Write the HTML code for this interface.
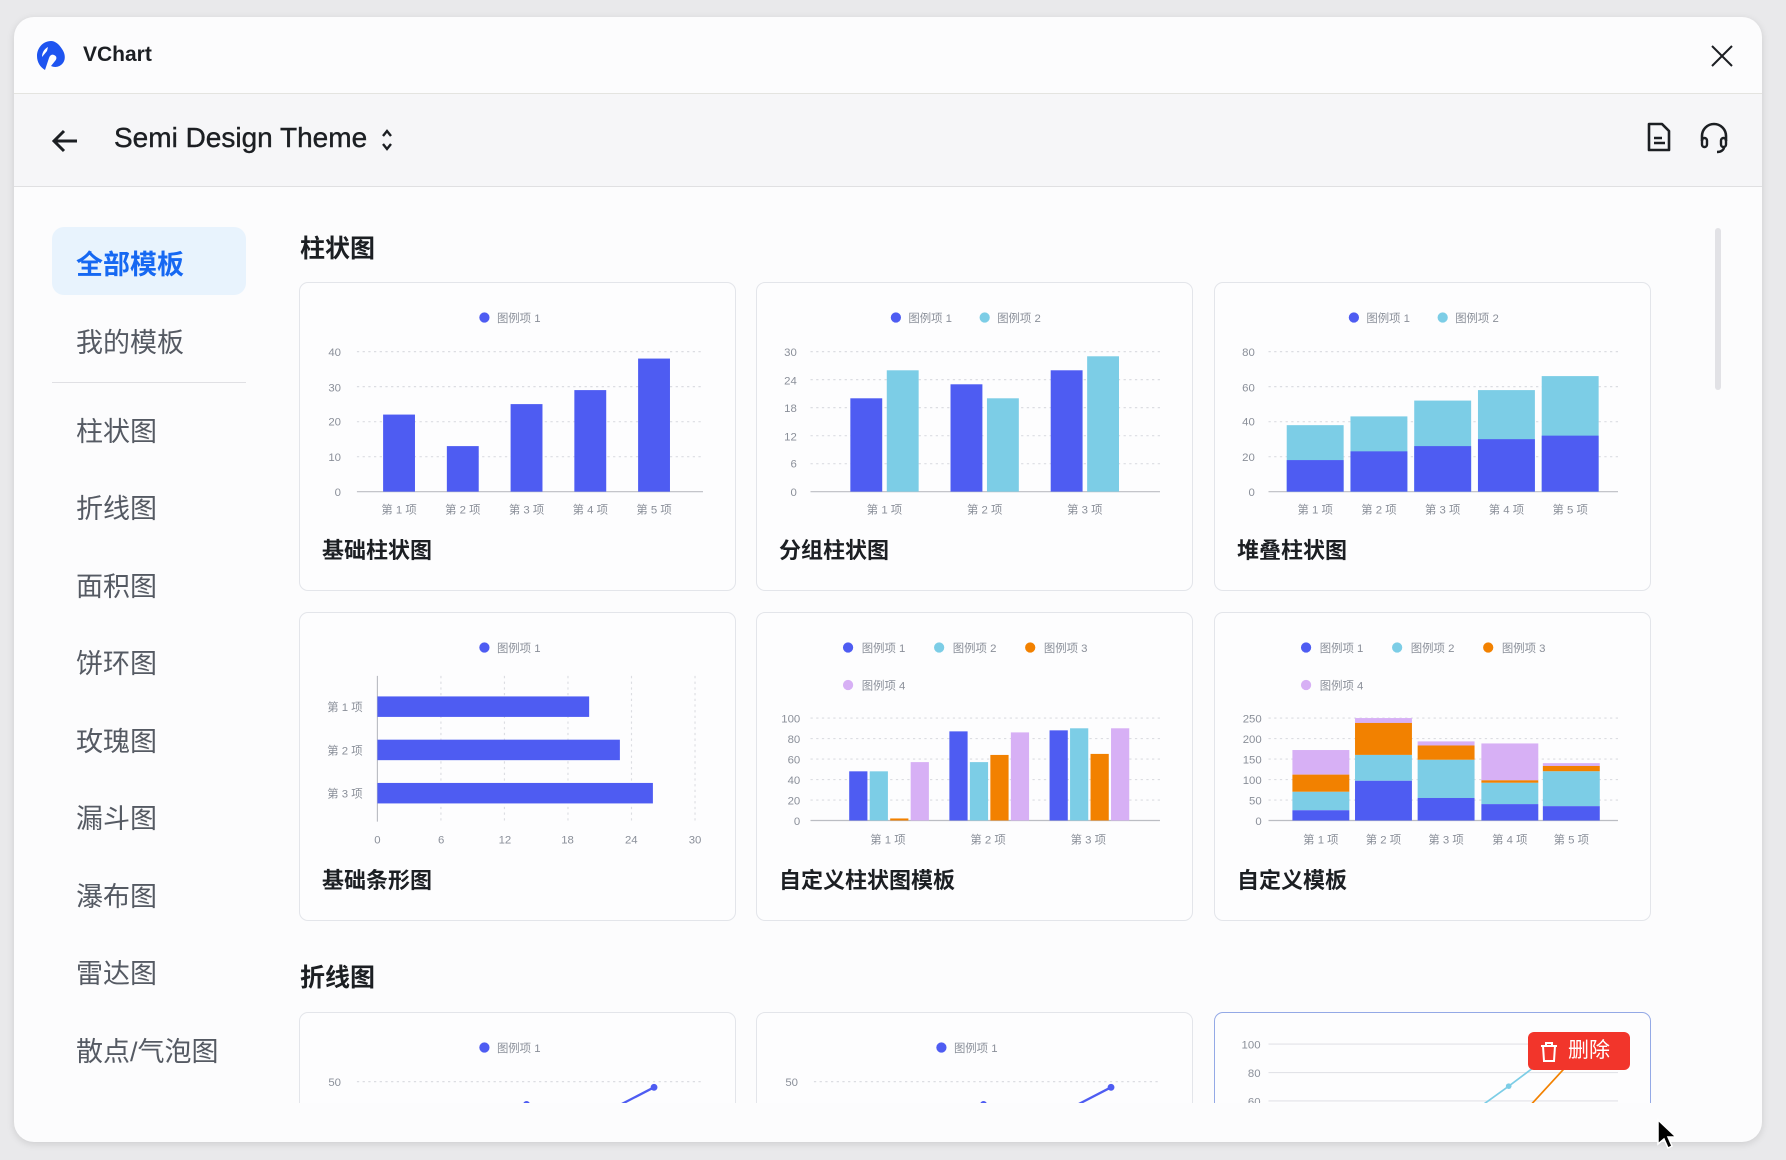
<!DOCTYPE html>
<html><head><meta charset="utf-8"><style>
*{margin:0;padding:0;box-sizing:border-box}
html,body{width:1786px;height:1160px;overflow:hidden}
body{background:#e9e9eb;position:relative;font-family:"Liberation Sans","Noto Sans CJK SC",sans-serif;}
.a{position:absolute}
.win{position:absolute;left:14px;top:17px;width:1748px;height:1125px;background:#fcfcfd;border-radius:20px;overflow:hidden;box-shadow:0 2px 8px rgba(0,0,0,.12)}
.side{font-size:27px;color:#555a63;left:62px}
.card{position:absolute;width:437px;height:309px;border:1px solid #e3e5ea;border-radius:9px;background:#fdfdfe;overflow:hidden}
.card svg{position:absolute;left:0;top:0}
.ct{position:absolute;left:22px;top:250px;font-size:22px;font-weight:bold;color:#1c1f23}
.sec{position:absolute;left:286px;font-size:25px;font-weight:bold;color:#1c1f23}
svg text{font-family:"Liberation Sans","Noto Sans CJK SC",sans-serif;fill:#8a8f99;font-size:10px}
</style></head><body>
<div class="win">
 <svg class="a" style="left:20px;top:22px" width="34" height="34" viewBox="0 0 34 34"><path d="M17 2C9 2 3 9 3 17c0 6 3 11 8 14l4-12c1-3 3-4 5-3 3 1 3 4 1 6l-4 5c4 2 9 1 12-3 3-4 2-10-1-14C25 5 21 2 17 2z" fill="#1e54f0"/><path d="M14 8c-4 2-6 6-6 10l5-6z" fill="#fff"/></svg>
 <div class="a" style="left:69px;top:26px;font-size:21px;font-weight:bold;color:#1c1f23">VChart</div>
 <svg class="a" style="left:1696px;top:27px" width="24" height="24" viewBox="0 0 24 24"><path d="M2 2L22 22M22 2L2 22" stroke="#1c1f23" stroke-width="2"/></svg>
 <div class="a" style="left:0;top:76px;width:1748px;height:1px;background:#e4e4e0"></div>
 <div class="a" style="left:0;top:77px;width:1748px;height:92px;background:#f6f6f8"></div>
 <div class="a" style="left:0;top:169px;width:1748px;height:1px;background:#e0e0e2"></div>
 <svg class="a" style="left:36px;top:109px" width="30" height="30" viewBox="0 0 30 30"><path d="M27 15H4M14 5L4 15l10 10" stroke="#1c1f23" stroke-width="3" fill="none"/></svg>
 <div class="a" style="left:100px;top:105px;font-size:28px;color:#1c1f23;-webkit-text-stroke:0.4px #1c1f23">Semi Design Theme</div>
 <svg class="a" style="left:366px;top:110px" width="14" height="26" viewBox="0 0 14 26"><path d="M3 9l4-5 4 5M3 17l4 5 4-5" stroke="#1c1f23" stroke-width="2.4" fill="none"/></svg>
 <svg class="a" style="left:1630px;top:104px" width="30" height="32" viewBox="0 0 30 32"><path d="M5 3h13l7 7v19H5z" stroke="#1c1f23" stroke-width="2.6" fill="none" stroke-linejoin="round"/><path d="M10 17h8M10 22h11" stroke="#1c1f23" stroke-width="2.4"/></svg>
 <svg class="a" style="left:1684px;top:104px" width="32" height="34" viewBox="0 0 32 34"><path d="M4 20v-5a12 12 0 0 1 24 0v5" stroke="#1c1f23" stroke-width="2.6" fill="none"/><rect x="4" y="17" width="5" height="9" rx="2.5" stroke="#1c1f23" stroke-width="2.4" fill="none"/><rect x="23" y="17" width="5" height="9" rx="2.5" stroke="#1c1f23" stroke-width="2.4" fill="none"/><path d="M26 26c0 3-3 5-7 5" stroke="#1c1f23" stroke-width="2.4" fill="none"/></svg>

 <div class="a" style="left:38px;top:210px;width:194px;height:68px;border-radius:12px;background:#e8f3fd"></div>
 <div class="a side" style="top:226px;color:#1668f2;font-weight:bold">全部模板</div>
 <div class="a side" style="top:304px">我的模板</div>
 <div class="a" style="left:38px;top:365px;width:194px;height:1px;background:#e0e0e4"></div>
 <div class="a side" style="top:393px">柱状图</div>
 <div class="a side" style="top:470px">折线图</div>
 <div class="a side" style="top:548px">面积图</div>
 <div class="a side" style="top:625px">饼环图</div>
 <div class="a side" style="top:703px">玫瑰图</div>
 <div class="a side" style="top:780px">漏斗图</div>
 <div class="a side" style="top:858px">瀑布图</div>
 <div class="a side" style="top:935px">雷达图</div>
 <div class="a side" style="top:1013px">散点/气泡图</div>

 <div class="a" style="left:1701px;top:211px;width:6px;height:162px;border-radius:3px;background:#e2e2e6"></div>

 <div class="a" style="left:0;top:170px;width:1748px;height:916px;overflow:hidden">
  <div class="sec" style="top:42px">柱状图</div>
  <div class="card" style="left:285px;top:95px"><svg width="436" height="308" viewBox="0 0 383 270">
   <circle cx="162" cy="30" r="4.5" fill="#4e5cf2"/><text x="173" y="34">图例项 1</text>
   <g stroke="#dcdde2" stroke-dasharray="2 3"><path d="M50 60H354M50 90.75H354M50 121.5H354M50 152.25H354"/></g><path d="M50 183H354" stroke="#bbbdc3"/>
   <g text-anchor="end"><text x="36" y="64">40</text><text x="36" y="95">30</text><text x="36" y="125">20</text><text x="36" y="156">10</text><text x="36" y="187">0</text></g>
   <g fill="#4e5cf2"><rect x="73" y="115.3" width="28" height="67.7"/><rect x="129" y="143" width="28" height="40"/><rect x="185" y="106.1" width="28" height="76.9"/><rect x="241" y="93.8" width="28" height="89.2"/><rect x="297" y="66.1" width="28" height="116.9"/></g>
   <g text-anchor="middle"><text x="87" y="202">第 1 项</text><text x="143" y="202">第 2 项</text><text x="199" y="202">第 3 项</text><text x="255" y="202">第 4 项</text><text x="311" y="202">第 5 项</text></g>
  </svg><div class="ct">基础柱状图</div></div>
  <div class="card" style="left:742px;top:95px"><svg width="436" height="308" viewBox="0 0 383 270">
   <circle cx="122" cy="30" r="4.5" fill="#4e5cf2"/><text x="133" y="34">图例项 1</text><circle cx="200" cy="30" r="4.5" fill="#7ccde6"/><text x="211" y="34">图例项 2</text>
   <g stroke="#dcdde2" stroke-dasharray="2 3"><path d="M47 60H354M47 84.6H354M47 109.2H354M47 133.8H354M47 158.4H354"/></g><path d="M47 183H354" stroke="#bbbdc3"/>
   <g text-anchor="end"><text x="35" y="64">30</text><text x="35" y="89">24</text><text x="35" y="113">18</text><text x="35" y="138">12</text><text x="35" y="162">6</text><text x="35" y="187">0</text></g>
   <g fill="#4e5cf2"><rect x="82" y="101" width="28" height="82"/><rect x="170" y="88.7" width="28" height="94.3"/><rect x="258" y="76.4" width="28" height="106.6"/></g>
   <g fill="#7ccde6"><rect x="114" y="76.4" width="28" height="106.6"/><rect x="202" y="101" width="28" height="82"/><rect x="290" y="64.1" width="28" height="118.9"/></g>
   <g text-anchor="middle"><text x="112" y="202">第 1 项</text><text x="200" y="202">第 2 项</text><text x="288" y="202">第 3 项</text></g>
  </svg><div class="ct">分组柱状图</div></div>
  <div class="card" style="left:1200px;top:95px"><svg width="436" height="308" viewBox="0 0 383 270">
   <circle cx="122" cy="30" r="4.5" fill="#4e5cf2"/><text x="133" y="34">图例项 1</text><circle cx="200" cy="30" r="4.5" fill="#7ccde6"/><text x="211" y="34">图例项 2</text>
   <g stroke="#dcdde2" stroke-dasharray="2 3"><path d="M47 60H354M47 90.75H354M47 121.5H354M47 152.25H354"/></g><path d="M47 183H354" stroke="#bbbdc3"/>
   <g text-anchor="end"><text x="35" y="64">80</text><text x="35" y="95">60</text><text x="35" y="125">40</text><text x="35" y="156">20</text><text x="35" y="187">0</text></g>
   <g fill="#7ccde6"><rect x="63" y="124.6" width="50" height="58.4"/><rect x="119" y="116.9" width="50" height="66.1"/><rect x="175" y="103" width="50" height="80"/><rect x="231" y="93.8" width="50" height="89.2"/><rect x="287" y="81.5" width="50" height="101.5"/></g>
   <g fill="#4e5cf2"><rect x="63" y="155.3" width="50" height="27.7"/><rect x="119" y="147.6" width="50" height="35.4"/><rect x="175" y="143" width="50" height="40"/><rect x="231" y="136.9" width="50" height="46.1"/><rect x="287" y="133.8" width="50" height="49.2"/></g>
   <g text-anchor="middle"><text x="88" y="202">第 1 项</text><text x="144" y="202">第 2 项</text><text x="200" y="202">第 3 项</text><text x="256" y="202">第 4 项</text><text x="312" y="202">第 5 项</text></g>
  </svg><div class="ct">堆叠柱状图</div></div>
  <div class="card" style="left:285px;top:425px"><svg width="436" height="308" viewBox="0 0 383 270">
   <circle cx="162" cy="30" r="4.5" fill="#4e5cf2"/><text x="173" y="34">图例项 1</text>
   <g stroke="#dcdde2" stroke-dasharray="2 3"><path d="M123.8 55V183M179.6 55V183M235.4 55V183M291.2 55V183M347 55V183"/></g><path d="M68 55V183" stroke="#bbbdc3"/>
   <g fill="#4e5cf2"><rect x="68" y="73" width="186" height="18"/><rect x="68" y="111" width="213" height="18"/><rect x="68" y="149" width="242" height="18"/></g>
   <g text-anchor="end"><text x="55" y="86">第 1 项</text><text x="55" y="124">第 2 项</text><text x="55" y="162">第 3 项</text></g>
   <g text-anchor="middle"><text x="68" y="202">0</text><text x="124" y="202">6</text><text x="180" y="202">12</text><text x="235" y="202">18</text><text x="291" y="202">24</text><text x="347" y="202">30</text></g>
  </svg><div class="ct">基础条形图</div></div>
  <div class="card" style="left:742px;top:425px"><svg width="436" height="308" viewBox="0 0 383 270">
   <circle cx="80" cy="30" r="4.5" fill="#4e5cf2"/><text x="92" y="34">图例项 1</text><circle cx="160" cy="30" r="4.5" fill="#7ccde6"/><text x="172" y="34">图例项 2</text><circle cx="240" cy="30" r="4.5" fill="#f28100"/><text x="252" y="34">图例项 3</text>
   <circle cx="80" cy="63" r="4.5" fill="#d7b0f5"/><text x="92" y="67">图例项 4</text>
   <g stroke="#dcdde2" stroke-dasharray="2 3"><path d="M47 92H354M47 110H354M47 128H354M47 146H354M47 164H354"/></g><path d="M47 182H354" stroke="#bbbdc3"/>
   <g text-anchor="end"><text x="38" y="96">100</text><text x="38" y="114">80</text><text x="38" y="132">60</text><text x="38" y="150">40</text><text x="38" y="168">20</text><text x="38" y="186">0</text></g>
   <g fill="#4e5cf2"><rect x="81" y="138.8" width="16" height="43.2"/><rect x="169" y="103.7" width="16" height="78.3"/><rect x="257" y="102.8" width="16" height="79.2"/></g>
   <g fill="#7ccde6"><rect x="99" y="138.8" width="16" height="43.2"/><rect x="187" y="130.7" width="16" height="51.3"/><rect x="275" y="101" width="16" height="81"/></g>
   <g fill="#f28100"><rect x="117" y="180.2" width="16" height="1.8"/><rect x="205" y="124.4" width="16" height="57.6"/><rect x="293" y="123.5" width="16" height="58.5"/></g>
   <g fill="#d7b0f5"><rect x="135" y="130.7" width="16" height="51.3"/><rect x="223" y="104.6" width="16" height="77.4"/><rect x="311" y="101" width="16" height="81"/></g>
   <g text-anchor="middle"><text x="115" y="202">第 1 项</text><text x="203" y="202">第 2 项</text><text x="291" y="202">第 3 项</text></g>
  </svg><div class="ct">自定义柱状图模板</div></div>
  <div class="card" style="left:1200px;top:425px"><svg width="436" height="308" viewBox="0 0 383 270">
   <circle cx="80" cy="30" r="4.5" fill="#4e5cf2"/><text x="92" y="34">图例项 1</text><circle cx="160" cy="30" r="4.5" fill="#7ccde6"/><text x="172" y="34">图例项 2</text><circle cx="240" cy="30" r="4.5" fill="#f28100"/><text x="252" y="34">图例项 3</text>
   <circle cx="80" cy="63" r="4.5" fill="#d7b0f5"/><text x="92" y="67">图例项 4</text>
   <g stroke="#dcdde2" stroke-dasharray="2 3"><path d="M47 92H354M47 110H354M47 128H354M47 146H354M47 164H354"/></g><path d="M47 182H354" stroke="#bbbdc3"/>
   <g text-anchor="end"><text x="41" y="96">250</text><text x="41" y="114">200</text><text x="41" y="132">150</text><text x="41" y="150">100</text><text x="41" y="168">50</text><text x="41" y="186">0</text></g>
   <g fill="#d7b0f5"><rect x="68" y="120.1" width="50" height="21.6"/><rect x="123" y="92" width="50" height="4.3"/><rect x="178" y="112.5" width="50" height="3.6"/><rect x="234" y="114.3" width="50" height="32.4"/><rect x="288" y="131.6" width="50" height="2.5"/></g>
   <g fill="#f28100"><rect x="68" y="141.7" width="50" height="15.1"/><rect x="123" y="96.3" width="50" height="28.1"/><rect x="178" y="116.1" width="50" height="12.6"/><rect x="234" y="146.7" width="50" height="2.2"/><rect x="288" y="134.1" width="50" height="4.7"/></g>
   <g fill="#7ccde6"><rect x="68" y="156.8" width="50" height="16.2"/><rect x="123" y="124.4" width="50" height="22.7"/><rect x="178" y="128.7" width="50" height="33.5"/><rect x="234" y="148.9" width="50" height="18.7"/><rect x="288" y="138.8" width="50" height="30.6"/></g>
   <g fill="#4e5cf2"><rect x="68" y="173" width="50" height="9"/><rect x="123" y="147.1" width="50" height="34.9"/><rect x="178" y="162.2" width="50" height="19.8"/><rect x="234" y="167.6" width="50" height="14.4"/><rect x="288" y="169.4" width="50" height="12.6"/></g>
   <g text-anchor="middle"><text x="93" y="202">第 1 项</text><text x="148" y="202">第 2 项</text><text x="203" y="202">第 3 项</text><text x="259" y="202">第 4 项</text><text x="313" y="202">第 5 项</text></g>
  </svg><div class="ct">自定义模板</div></div>

  <div class="sec" style="top:771px">折线图</div>
  <div class="card" style="left:285px;top:825px"><svg width="436" height="308" viewBox="0 0 383 270">
   <circle cx="162" cy="30" r="4.5" fill="#4e5cf2"/><text x="173" y="34">图例项 1</text>
   <path d="M50 60H354" stroke="#dcdde2" stroke-dasharray="2 3"/><text x="36" y="64" text-anchor="end">50</text>
   <path d="M150 86L199 80L282 80L311 65" stroke="#4e5cf2" stroke-width="2" fill="none"/><circle cx="199" cy="80" r="3" fill="#4e5cf2"/><circle cx="311" cy="65" r="3" fill="#4e5cf2"/>
  </svg></div>
  <div class="card" style="left:742px;top:825px"><svg width="436" height="308" viewBox="0 0 383 270">
   <circle cx="162" cy="30" r="4.5" fill="#4e5cf2"/><text x="173" y="34">图例项 1</text>
   <path d="M50 60H354" stroke="#dcdde2" stroke-dasharray="2 3"/><text x="36" y="64" text-anchor="end">50</text>
   <path d="M150 86L199 80L282 80L311 65" stroke="#4e5cf2" stroke-width="2" fill="none"/><circle cx="199" cy="80" r="3" fill="#4e5cf2"/><circle cx="311" cy="65" r="3" fill="#4e5cf2"/>
  </svg></div>
  <div class="card" style="left:1200px;top:825px;border:1.5px solid #94a9e6"><svg width="436" height="308" viewBox="0 0 383 270">
   <g stroke="#e2e3e8"><path d="M47 27H354M47 52H354M47 77H354"/></g>
   <g text-anchor="end"><text x="40" y="31">100</text><text x="40" y="56">80</text><text x="40" y="81">60</text></g>
   <path d="M233 82L258 64L290 40" stroke="#7ccde6" stroke-width="1.5" fill="none"/><circle cx="258" cy="64" r="2.5" fill="#7ccde6"/>
   <path d="M276 82L310 45" stroke="#f28100" stroke-width="1.5" fill="none"/>
  </svg>
   <div class="a" style="left:313px;top:19px;width:102px;height:38px;background:#f2352b;border-radius:6px;color:#fff;font-size:21px;line-height:38px;padding-left:40px">删除</div>
   <svg class="a" style="left:324px;top:28px" width="20" height="22" viewBox="0 0 20 22"><path d="M2 5h16M7 5V2h6v3M4 5l1 15h10l1-15" stroke="#fff" stroke-width="2" fill="none"/></svg>
  </div>
 </div>
</div>
<svg class="a" style="left:1656px;top:1118px" width="22" height="32" viewBox="0 0 22 32"><path d="M2 2v24l6-5 4 9 4-2-4-9h8z" fill="#000" stroke="#fff" stroke-width="1.5"/></svg>
</body></html>
